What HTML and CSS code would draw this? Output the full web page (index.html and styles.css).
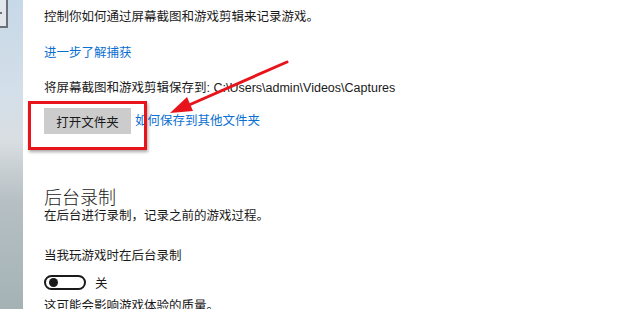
FILE: index.html
```html
<!DOCTYPE html>
<html lang="zh-CN">
<head>
    <meta charset="UTF-8">
    <meta name="viewport" content="width=device-width, initial-scale=1.0">
    <title>捕获</title>
    <link rel="stylesheet" href="styles.css">
</head>
<body>
    <div class="desktop">
        <div class="window-edge"><span></span></div>
    </div>
    <div class="settings">
        <p class="intro">控制你如何通过屏幕截图和游戏剪辑来记录游戏。</p>
        <a class="link learn" href="#">进一步了解捕获</a>
        <p class="path">将屏幕截图和游戏剪辑保存到: C:\Users\admin\Videos\Captures</p>
        <div class="actions">
            <button class="open-btn" type="button">打开文件夹</button>
            <a class="link" href="#">如何保存到其他文件夹</a>
        </div>

        <h2>后台录制</h2>
        <p class="desc">在后台进行录制，记录之前的游戏过程。</p>
        <p class="label">当我玩游戏时在后台录制</p>
        <div class="toggle-row">
            <span class="toggle"><span class="knob"></span></span>
            <span class="state">关</span>
        </div>
        <p class="note">这可能会影响游戏体验的质量。</p>
    </div>

    <!-- annotation drawn over the screenshot -->
    <div class="mark-box"></div>
    <svg class="mark-arrow" width="620" height="309" viewBox="0 0 620 309">
        <line x1="287" y1="62" x2="189" y2="105" stroke="#e8141b" stroke-width="3" stroke-linecap="round"/>
        <polygon points="170,113 193,111 187,97" fill="#e8141b"/>
    </svg>
</body>
</html>
```

FILE: styles.css
```css
body {
    margin: 0;
    display: flex;
    height: 309px;
    overflow: hidden;
    background: #ffffff;
    font-family: "Liberation Sans", "Noto Sans CJK SC", sans-serif;
    font-size: 12.5px;
    color: #1a1a1a;
}

.desktop {
    width: 23px;
    flex-shrink: 0;
    background: linear-gradient(#c7d8e7 0%, #d3dfe9 30%, #d9dee2 45%, #b6c0c4 65%, #a4b2b6 100%);
}

.window-edge {
    width: 6px;
    height: 26px;
    background: #e2e7ee;
    border-right: 2px solid #6b7079;
    border-bottom: 2px solid #6b7079;
    position: relative;
}

.window-edge span {
    position: absolute;
    left: 0;
    top: 12px;
    width: 2px;
    height: 2px;
    background: #6b7079;
}

.settings {
    padding-left: 21px;
    display: flex;
    flex-direction: column;
    align-items: flex-start;
}

p {
    margin: 0;
    line-height: 20px;
}

.intro {
    margin-top: 7px;
}

.link {
    color: #0a6fd1;
    text-decoration: none;
    line-height: 20px;
}

.learn {
    margin-top: 16px;
}

.path {
    margin-top: 15px;
}

.actions {
    margin-top: 10px;
    display: flex;
    align-items: center;
    gap: 4px;
}

.open-btn {
    width: 87px;
    height: 26px;
    border: none;
    background: #cccccc;
    font-family: inherit;
    font-size: 12.5px;
    color: #1a1a1a;
    padding: 0;
}

h2 {
    margin: 55px 0 0;
    font-size: 18px;
    font-weight: 300;
    line-height: 18px;
}

.desc {
    margin-top: 1px;
    line-height: 16px;
}

.label {
    margin-top: 22px;
}

.toggle-row {
    margin-top: 7px;
    display: flex;
    align-items: center;
    gap: 9px;
}

.toggle {
    width: 35px;
    height: 11px;
    border: 2px solid #1a1a1a;
    border-radius: 8px;
    display: flex;
    align-items: center;
    padding-left: 3px;
}

.knob {
    width: 9px;
    height: 9px;
    border-radius: 50%;
    background: #1a1a1a;
}

.note {
    margin-top: 4px;
}

.mark-box {
    position: absolute;
    left: 28px;
    top: 101px;
    width: 113px;
    height: 43px;
    border: 3px solid #e8141b;
    box-shadow: 1px 2px 3px rgba(0, 0, 0, 0.35);
}

.mark-arrow {
    position: absolute;
    left: 0;
    top: 0;
    pointer-events: none;
}
```
